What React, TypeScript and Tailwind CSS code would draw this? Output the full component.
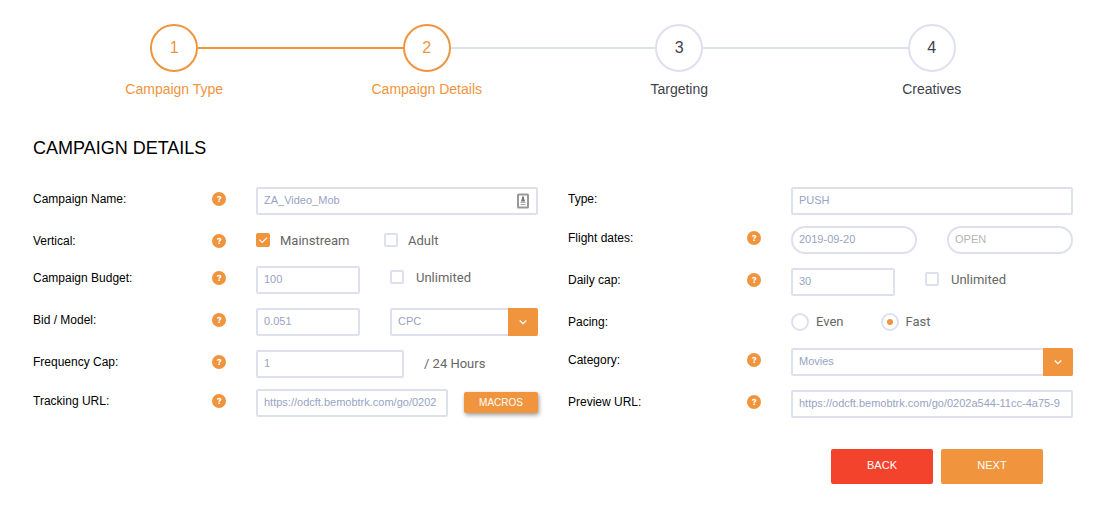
import { useState } from "react";
import type { ReactNode } from "react";
import clsx from "clsx";

const steps = ["Campaign Type", "Campaign Details", "Targeting", "Creatives"];
const currentStep = 1;

const fieldClass =
  "block h-7 min-w-0 border-2 border-[#dde1ee] bg-white px-1.5 pb-0.5 text-[11px] text-[#98a3c3] placeholder:text-[#b5b5b5] focus:outline-none focus:border-[#f0943e]";

const Stepper = () => (
  <ol className="grid grid-cols-4 pl-12 pr-[51px] pt-6 text-[#3f3f4e]">
    {steps.map((label, i) => (
      <li
        key={label}
        aria-current={i === currentStep ? "step" : undefined}
        className={clsx("text-center", i <= currentStep && "text-[#f0943e]")}
      >
        <div className="flex items-center">
          <span
            className={clsx(
              "h-0.5 flex-1",
              i === 0 ? "bg-transparent" : i <= currentStep ? "bg-[#f0943e]" : "bg-[#dde1ee]"
            )}
          />
          <span
            className={clsx(
              "flex h-12 w-12 items-center justify-center rounded-full border-2 text-base",
              i <= currentStep ? "border-[#f0943e]" : "border-[#dde1ee]"
            )}
          >
            {i + 1}
          </span>
          <span
            className={clsx(
              "h-0.5 flex-1",
              i === steps.length - 1 ? "bg-transparent" : i < currentStep ? "bg-[#f0943e]" : "bg-[#dde1ee]"
            )}
          />
        </div>
        <p className="mt-[7px] text-sm">{label}</p>
      </li>
    ))}
  </ol>
);

interface RowProps {
  label: string;
  htmlFor?: string;
  help?: boolean;
  className?: string;
  children: ReactNode;
}

const Row = ({ label, htmlFor, help = true, className, children }: RowProps) => (
  <div
    role={htmlFor ? undefined : "group"}
    aria-label={htmlFor ? undefined : label}
    className={clsx("flex min-h-7 items-start", className)}
  >
    <div className="flex h-6 w-[193px] shrink-0 items-center justify-between text-xs text-black">
      {htmlFor ? <label htmlFor={htmlFor}>{label}</label> : <span>{label}</span>}
      {help && (
        <button
          type="button"
          aria-label={`Help: ${label}`}
          className="flex h-3.5 w-3.5 items-center justify-center rounded-full bg-[#f0943e] text-white"
        >
          <svg viewBox="0 0 14 14" className="h-3.5 w-3.5" fill="none" stroke="currentColor" aria-hidden="true">
            <path d="M5.4 5.7C5.5 4.8 6.1 4.4 7 4.4c1 0 1.7.5 1.7 1.2 0 1-1.6 1-1.6 2.2" strokeWidth="1.5" />
            <path d="M6.3 9.3h1.6" strokeWidth="1.5" />
          </svg>
        </button>
      )}
    </div>
    <div className="ml-[30px] flex min-w-0 flex-1 items-start">{children}</div>
  </div>
);

interface CheckboxProps {
  label: string;
  checked: boolean;
  onChange: (checked: boolean) => void;
  className?: string;
}

const Checkbox = ({ label, checked, onChange, className }: CheckboxProps) => (
  <label className={clsx("flex h-6 cursor-pointer items-center font-[Roboto,sans-serif] text-[13px] text-[#666]", className)}>
    <span className="relative mb-0.5 h-3.5 w-3.5">
      <input
        type="checkbox"
        checked={checked}
        onChange={(e) => onChange(e.target.checked)}
        className="block h-3.5 w-3.5 appearance-none rounded-xs border-2 border-[#dde1ee] checked:border-[#f0943e] checked:bg-[#f0943e]"
      />
      {checked && (
        <svg
          viewBox="0 0 14 14"
          className="pointer-events-none absolute inset-0 h-3.5 w-3.5"
          fill="none"
          stroke="#fff"
          strokeWidth="1.2"
          aria-hidden="true"
        >
          <path d="M3.3 6.6 6.2 9.4l4.9-4.8" />
        </svg>
      )}
    </span>
    {label}
  </label>
);

interface RadioProps {
  label: string;
  checked: boolean;
  onChange: () => void;
}

const Radio = ({ label, checked, onChange }: RadioProps) => (
  <label className="flex h-6 cursor-pointer items-center gap-[7px] font-[Roboto,sans-serif] text-[13px] text-[#666]">
    <span className="relative h-[18px] w-[18px]">
      <input
        type="radio"
        name="pacing"
        checked={checked}
        onChange={onChange}
        className="block h-[18px] w-[18px] appearance-none rounded-full border-2 border-[#dde1ee]"
      />
      {checked && <span className="pointer-events-none absolute left-1.5 top-1.5 h-1.5 w-1.5 rounded-full bg-[#f0943e]" />}
    </span>
    {label}
  </label>
);

interface SelectProps {
  id?: string;
  label?: string;
  options: string[];
  className?: string;
}

const Select = ({ id, label, options, className }: SelectProps) => (
  <div className={clsx("relative min-w-0 flex-1", className)}>
    <select id={id} aria-label={label} className={clsx(fieldClass, "w-full appearance-none rounded-xs pr-9")}>
      {options.map((option) => (
        <option key={option}>{option}</option>
      ))}
    </select>
    <span className="pointer-events-none absolute inset-y-0 right-0 flex w-[30px] items-center justify-center rounded-r-xs bg-[#f0943e] text-white">
      <svg viewBox="0 0 10 10" className="h-2.5 w-2.5" fill="none" stroke="currentColor" strokeWidth="1.3" aria-hidden="true">
        <path d="M1.7 3.5 5 6.6l3.3-3.1" />
      </svg>
    </span>
  </div>
);

// Autofill badge at the end of the name field
const ContactIcon = () => (
  <svg viewBox="0 0 12 16" className="pointer-events-none absolute right-[9px] top-1.5 h-4 w-3" aria-hidden="true">
    <rect x="1" y="1.5" width="10" height="13" rx="0.5" fill="#fff" stroke="#999" strokeWidth="2" />
    <rect x="5" y="3.5" width="2" height="2.5" fill="#777" />
    <path d="M5 5.5h2L8.3 8.5H3.7z" fill="#777" />
    <path d="M3.5 9.5h5M3.5 11.5h5" stroke="#aaa" strokeWidth="1" />
  </svg>
);

const App = () => {
  const [mainstream, setMainstream] = useState(true);
  const [adult, setAdult] = useState(false);
  const [budgetUnlimited, setBudgetUnlimited] = useState(false);
  const [capUnlimited, setCapUnlimited] = useState(false);
  const [pacing, setPacing] = useState("fast");

  return (
    <main className="bg-white pb-[22px] font-['Liberation_Sans',Arial,sans-serif]">
      <Stepper />

      <form className="pl-[33px] pr-9" onSubmit={(e) => e.preventDefault()}>
        <h1 className="mt-[35px] text-lg text-black">CAMPAIGN DETAILS</h1>

        <div className="mt-[25px] grid grid-cols-2 gap-[30px]">
          <div>
            <Row label="Campaign Name:" htmlFor="name" className="mb-3.5">
              <div className="relative min-w-0 flex-1">
                <input id="name" type="text" defaultValue="ZA_Video_Mob" className={clsx(fieldClass, "w-full rounded-xs pr-7")} />
                <ContactIcon />
              </div>
            </Row>
            <Row label="Vertical:" className="mb-[9px]">
              <Checkbox label="Mainstream" checked={mainstream} onChange={setMainstream} className="w-32 gap-2.5" />
              <Checkbox label="Adult" checked={adult} onChange={setAdult} className="gap-2.5" />
            </Row>
            <Row label="Campaign Budget:" htmlFor="budget" className="mb-3.5">
              <input id="budget" type="text" defaultValue="100" className={clsx(fieldClass, "w-[104px] rounded-xs")} />
              <Checkbox label="Unlimited" checked={budgetUnlimited} onChange={setBudgetUnlimited} className="ml-[30px] gap-3" />
            </Row>
            <Row label="Bid / Model:" htmlFor="bid" className="mb-3.5">
              <input id="bid" type="text" defaultValue="0.051" className={clsx(fieldClass, "w-[104px] rounded-xs")} />
              <Select label="Model" options={["CPC", "CPM"]} className="ml-[30px]" />
            </Row>
            <Row label="Frequency Cap:" htmlFor="frequency" className="mb-[11px]">
              <input id="frequency" type="text" defaultValue="1" className={clsx(fieldClass, "w-[148px] rounded-xs")} />
              <span className="ml-5 font-[Roboto,sans-serif] text-[13px] leading-7 text-[#666]">/ 24 Hours</span>
            </Row>
            <Row label="Tracking URL:" htmlFor="tracking">
              <input
                id="tracking"
                type="text"
                defaultValue="https://odcft.bemobtrk.com/go/0202"
                className={clsx(fieldClass, "flex-1 rounded-xs")}
              />
              <button
                type="button"
                className="ml-4 mt-[3px] h-[21px] w-[74px] rounded-xs bg-[#f0943e] text-[10px] text-white shadow-[1px_2px_4px_rgba(0,0,0,0.4)]"
              >
                MACROS
              </button>
            </Row>
          </div>

          <div>
            <Row label="Type:" htmlFor="type" help={false} className="mb-[11px]">
              <input id="type" type="text" defaultValue="PUSH" className={clsx(fieldClass, "flex-1 rounded-xs")} />
            </Row>
            <Row label="Flight dates:" htmlFor="start" className="mb-3.5">
              <div className="grid flex-1 grid-cols-2 gap-[30px]">
                <input id="start" type="text" defaultValue="2019-09-20" className={clsx(fieldClass, "rounded-full")} />
                <input type="text" aria-label="End date" placeholder="OPEN" className={clsx(fieldClass, "rounded-full")} />
              </div>
            </Row>
            <Row label="Daily cap:" htmlFor="cap" className="mb-3.5">
              <input id="cap" type="text" defaultValue="30" className={clsx(fieldClass, "w-[104px] rounded-xs")} />
              <Checkbox label="Unlimited" checked={capUnlimited} onChange={setCapUnlimited} className="ml-[30px] gap-3" />
            </Row>
            <Row label="Pacing:" help={false} className="mb-2.5">
              <div className="flex gap-[37px]">
                <Radio label="Even" checked={pacing === "even"} onChange={() => setPacing("even")} />
                <Radio label="Fast" checked={pacing === "fast"} onChange={() => setPacing("fast")} />
              </div>
            </Row>
            <Row label="Category:" htmlFor="category" className="mb-3.5">
              <Select id="category" options={["Movies", "Games", "Music"]} />
            </Row>
            <Row label="Preview URL:" htmlFor="preview">
              <input
                id="preview"
                type="text"
                defaultValue="https://odcft.bemobtrk.com/go/0202a544-11cc-4a75-9"
                className={clsx(fieldClass, "flex-1 rounded-xs")}
              />
            </Row>
          </div>
        </div>

        <div className="mr-[30px] mt-[31px] flex justify-end gap-2 text-[11px] text-white">
          <button type="button" className="h-[35px] w-[102px] rounded-xs bg-[#f4432c] pb-0.5">
            BACK
          </button>
          <button type="submit" className="h-[35px] w-[102px] rounded-xs bg-[#f0943e] pb-0.5">
            NEXT
          </button>
        </div>
      </form>
    </main>
  );
};

export default App;
